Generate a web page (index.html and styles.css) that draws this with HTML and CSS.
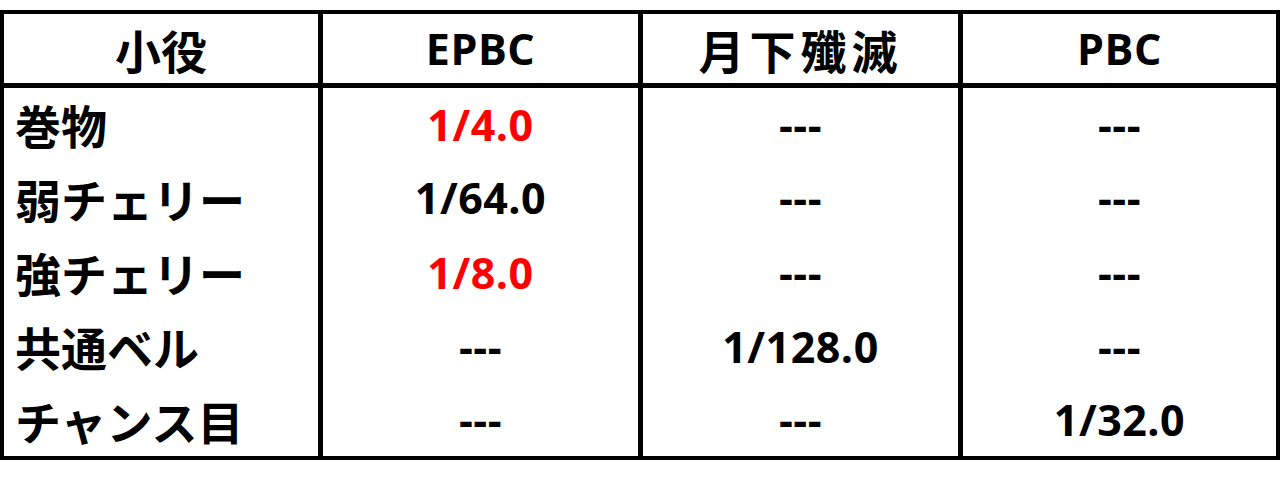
FILE: index.html
```html
<!DOCTYPE html>
<html lang="ja">
<head>
<meta charset="utf-8">
<title>小役</title>
<link rel="stylesheet" href="styles.css">
</head>
<body>
<table class="odds">
  <colgroup>
    <col class="c1"><col class="c2"><col class="c3"><col class="c4">
  </colgroup>
  <thead>
    <tr class="head">
      <th class="jp">小役</th>
      <th class="num">EPBC</th>
      <th class="jp wide">月下殲滅</th>
      <th class="num">PBC</th>
    </tr>
  </thead>
  <tbody>
    <tr class="r1">
      <td class="label">巻物</td>
      <td class="num red">1/4.0</td>
      <td class="num">---</td>
      <td class="num">---</td>
    </tr>
    <tr class="r2">
      <td class="label">弱チェリー</td>
      <td class="num">1/64.0</td>
      <td class="num">---</td>
      <td class="num">---</td>
    </tr>
    <tr class="r3">
      <td class="label">強チェリー</td>
      <td class="num red">1/8.0</td>
      <td class="num">---</td>
      <td class="num">---</td>
    </tr>
    <tr class="r4">
      <td class="label">共通ベル</td>
      <td class="num">---</td>
      <td class="num">1/128.0</td>
      <td class="num">---</td>
    </tr>
    <tr class="r5">
      <td class="label">チャンス目</td>
      <td class="num">---</td>
      <td class="num">---</td>
      <td class="num">1/32.0</td>
    </tr>
  </tbody>
</table>
</body>
</html>
```
FILE: styles.css
```css
html, body {
  margin: 0;
  padding: 0;
  background: #ffffff;
}

body {
  padding-top: 10px;
}

.odds {
  width: 1280px;
  box-sizing: border-box;
  border: 4px solid #000;
  border-spacing: 0;
  table-layout: fixed;
  color: #000;
}

.c1 { width: 319px; }
.c2 { width: 320px; }
.c3 { width: 320px; }

.odds th,
.odds td {
  padding: 0;
  text-align: center;
  vertical-align: middle;
  line-height: 1;
  border-right: 5px solid #000;
  font-weight: 700;
}

.odds th:last-child,
.odds td:last-child {
  border-right: 0;
}

.head th {
  height: 69px;
  border-bottom: 5px solid #000;
}

.r1 td { height: 72px; }
.r2 td { height: 75px; }
.r3 td { height: 74px; }
.r4 td { height: 74px; }
.r5 td { height: 73px; }

.jp,
.label {
  font-family: "Noto Sans CJK JP", sans-serif;
  font-size: 46px;
  font-weight: 700;
}

.wide {
  letter-spacing: 5px;
  padding-left: 5px;
}

.odds .label {
  text-align: left;
  padding-left: 11px;
}

.num {
  font-family: "Open Sans", "Liberation Sans", sans-serif;
  font-size: 43px;
  font-weight: 700;
  letter-spacing: 0.5px;
}

.red {
  color: #ff0000;
}
```
